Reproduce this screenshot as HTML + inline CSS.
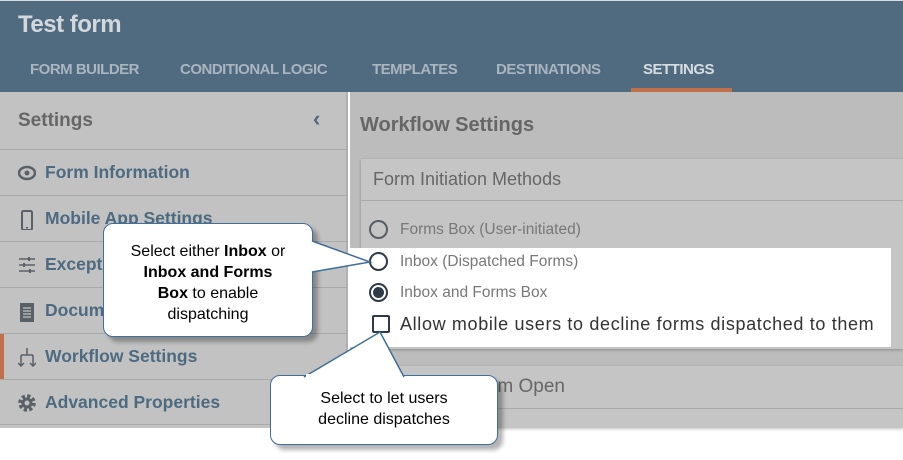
<!DOCTYPE html>
<html><head><meta charset="utf-8"><style>
*{margin:0;padding:0;box-sizing:border-box}
body{width:903px;height:460px;background:#fff;font-family:"Liberation Sans",sans-serif;position:relative;overflow:hidden}
.a{position:absolute}
.hdr{left:0;top:0;width:903px;height:92px;background:#506a80;border-top:1px solid #ddd}
.title{left:18px;top:11px;font-size:24px;font-weight:bold;color:#d3d8dc;letter-spacing:-0.5px}
.tab{top:61px;font-size:15px;font-weight:bold;color:#a9b5bf;letter-spacing:-0.5px}
.left{left:0;top:92px;width:348px;height:336px;background:#c2c2c2;border-right:2px solid #b0b0b0}
.right{left:350px;top:92px;width:553px;height:336px;background:#bcbcbc}
.item{left:0;width:348px;height:46px;border-top:1px solid #a9a9a9;font-size:17.5px;font-weight:bold;color:#4d6a80;padding:12px 0 0 45px}
.ic{position:absolute;left:18px;top:14px;width:18px;height:18px}
.card{background:#c5c5c5;box-shadow:0 1px 3px rgba(0,0,0,.25)}
.opt{font-size:15.5px;color:#777}
.rad{width:19px;height:19px;border:2px solid #555d66;border-radius:50%}
.bub{background:#fff;border:1.5px solid #3f6f9a;border-radius:10px;box-shadow:5px 5px 4px rgba(0,0,0,.3);font-size:16px;color:#000;text-align:center;line-height:21px}
</style></head><body>
<div class="a hdr"></div>
<div class="a title">Test form</div>
<div class="a tab" style="left:30px">FORM BUILDER</div>
<div class="a tab" style="left:180px">CONDITIONAL LOGIC</div>
<div class="a tab" style="left:372px">TEMPLATES</div>
<div class="a tab" style="left:496px">DESTINATIONS</div>
<div class="a tab" style="left:643px;color:#d8dde1">SETTINGS</div>
<div class="a" style="left:631px;top:88px;width:101px;height:4px;background:#c0714a"></div>

<div class="a left"></div>
<div class="a" style="left:18px;top:110px;font-size:19px;font-weight:bold;color:#666">Settings</div>
<div class="a" style="left:313px;top:106px;font-size:22px;font-weight:bold;color:#4d6a80">‹</div>
<div class="a item" style="top:149px"><svg class="ic" viewBox="0 0 18 18"><ellipse cx="9" cy="9" rx="8" ry="6" fill="none" stroke="#5a6068" stroke-width="2.5"/><circle cx="9" cy="9" r="2.5" fill="#5a6068"/></svg>Form Information</div>
<div class="a item" style="top:195px"><svg class="ic" viewBox="0 0 18 18" style="top:12px;height:22px"><rect x="4" y="1" width="10" height="19" rx="1.5" fill="none" stroke="#5a6068" stroke-width="2"/><rect x="8" y="17" width="2" height="1.5" fill="#5a6068"/></svg>Mobile App Settings</div>
<div class="a item" style="top:241px"><svg class="ic" viewBox="0 0 18 18"><path d="M1 3h16M1 9h16M1 15h16" stroke="#5a6068" stroke-width="1.5"/><rect x="10" y="1" width="2" height="4" fill="#5a6068"/><rect x="5" y="7" width="2" height="4" fill="#5a6068"/><rect x="11" y="13" width="2" height="4" fill="#5a6068"/></svg>Exceptions</div>
<div class="a item" style="top:287px"><svg class="ic" viewBox="0 0 18 18" style="height:20px"><rect x="2" y="0" width="14" height="19" fill="#5a6068"/><path d="M5 5h8M5 8h8M5 11h8M5 14h8" stroke="#c2c2c2" stroke-width="1.2"/></svg>Documents</div>
<div class="a item" style="top:333px"><svg class="ic" viewBox="0 0 18 18" style="top:13px;height:20px"><path d="M9 0v7M3 7h12M3 7v11M15 7v11M0 15l3 3 3-3M12 15l3 3 3-3" fill="none" stroke="#5a6068" stroke-width="1.5"/></svg>Workflow Settings</div>
<div class="a" style="left:0;top:334px;width:4px;height:45px;background:#c0714a"></div>
<div class="a item" style="top:379px;border-bottom:1px solid #a9a9a9"><svg class="ic" viewBox="0 0 18 18"><circle cx="9" cy="9" r="6.5" fill="none" stroke="#5a6068" stroke-width="4.5" stroke-dasharray="3 2.1"/><circle cx="9" cy="9" r="5.5" fill="#5a6068"/><circle cx="9" cy="9" r="2.5" fill="#c2c2c2"/></svg>Advanced Properties</div>

<div class="a right"></div>
<div class="a" style="left:360px;top:114px;font-size:20px;font-weight:bold;color:#666">Workflow Settings</div>
<div class="a card" style="left:361px;top:159px;width:542px;height:190px"></div>
<div class="a" style="left:361px;top:200px;width:542px;height:1px;background:#aaa"></div>
<div class="a" style="left:373px;top:169px;font-size:18px;color:#666">Form Initiation Methods</div>
<div class="a rad" style="left:369px;top:220px"></div>
<div class="a opt" style="left:400px;top:221px">Forms Box (User-initiated)</div>
<div class="a" style="left:350px;top:248px;width:541px;height:99px;background:#fff"></div>
<div class="a rad" style="left:369px;top:252px;border-color:#2f3a48"></div>
<div class="a opt" style="left:400px;top:253px">Inbox (Dispatched Forms)</div>
<div class="a rad" style="left:369px;top:283px;border-color:#2f3a48"><div style="width:11px;height:11px;margin:2px;border-radius:50%;background:#2f3a48"></div></div>
<div class="a opt" style="left:400px;top:284px">Inbox and Forms Box</div>
<div class="a" style="left:372px;top:315px;width:18px;height:18px;border:2px solid #2f3a48;border-radius:2px"></div>
<div class="a" style="left:400px;top:314px;font-size:18px;color:#333;letter-spacing:0.65px;white-space:nowrap">Allow mobile users to decline forms dispatched to them</div>
<div class="a card" style="left:361px;top:366px;width:542px;height:62px"></div>
<div class="a" style="left:361px;top:408px;width:542px;height:1px;background:#aaa"></div>
<div class="a" style="left:265px;top:376px;width:300px;text-align:right;font-size:19px;color:#666;white-space:nowrap">Behavior on Form Open</div>

<div class="a bub" style="left:103px;top:223px;width:210px;height:114px;padding-top:17px">Select either <b>Inbox</b> or<br><b>Inbox and Forms<br>Box</b> to enable<br>dispatching</div>
<svg class="a" style="left:300px;top:240px" width="80" height="50"><path d="M12 1 L70 22 L12 32" fill="#fff" stroke="#3f6f9a" stroke-width="1.5"/><rect x="5" y="2" width="8.5" height="29" fill="#fff"/></svg>
<div class="a bub" style="left:270px;top:375px;width:228px;height:70px;padding-top:12px">Select to let users<br>decline dispatches</div>
<svg class="a" style="left:270px;top:330px" width="140" height="50"><path d="M34 47 L110 2 L134 47" fill="#fff" stroke="#3f6f9a" stroke-width="1.5"/><rect x="36" y="44" width="96" height="8" fill="#fff"/></svg>
</body></html>
